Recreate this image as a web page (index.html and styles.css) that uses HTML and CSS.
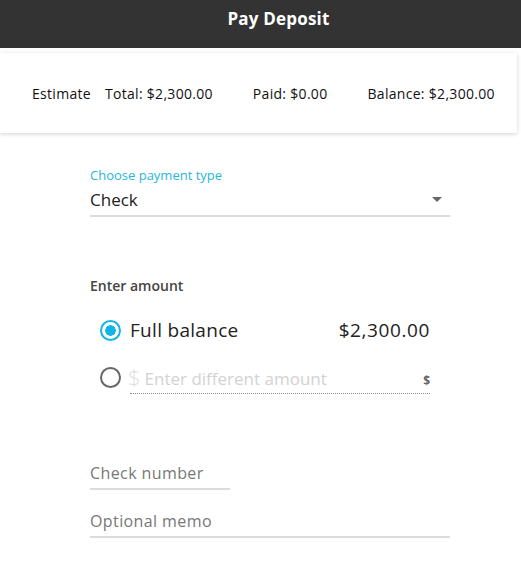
FILE: index.html
```html
<!DOCTYPE html>
<html lang="en">
<head>
  <meta charset="UTF-8" />
  <title>Pay Deposit</title>
  <meta name="viewport" content="width=device-width, initial-scale=1" />
  <link rel="stylesheet" href="styles.css">
</head>
<body>
  <header class="topbar">
    <h1>Pay Deposit</h1>
  </header>

  <section class="summary">
    <span class="summary-label">Estimate</span>
    <span class="summary-total">Total: $2,300.00</span>
    <span class="summary-paid">Paid: $0.00</span>
    <span class="summary-balance">Balance: $2,300.00</span>
  </section>

  <main class="form">
    <div class="field select-field">
      <label class="float-label">Choose payment type</label>
      <div class="select-value">
        <span>Check</span>
        <span class="caret"></span>
      </div>
    </div>

    <div class="amount">
      <div class="section-title">Enter amount</div>
      <div class="radio-row">
        <span class="radio checked"></span>
        <span class="radio-text">Full balance</span>
        <span class="radio-amount">$2,300.00</span>
      </div>
      <div class="radio-row">
        <span class="radio"></span>
        <div class="other-amount">
          <span class="dollar-big">$</span>
          <span class="placeholder">Enter different amount</span>
          <span class="dollar-small">$</span>
        </div>
      </div>
    </div>

    <div class="field text-field short">Check number</div>
    <div class="field text-field">Optional memo</div>
  </main>
</body>
</html>
```

FILE: styles.css
```css
body {
  margin: 0;
  font-family: 'Open Sans', sans-serif;
  background: #ffffff;
  color: #222;
}
.topbar {
  background: #333333;
  height: 48px;
  display: flex;
  align-items: center;
  justify-content: center;
}
.topbar h1 {
  margin: 0 0 12px 36px;
  color: #fff;
  font-size: 17px;
  letter-spacing: 0.2px;
  font-weight: 700;
}
.summary {
  margin: 5px 4px 0 0;
  height: 80px;
  background: #fff;
  box-shadow: 0 1px 4px rgba(0, 0, 0, 0.18);
  display: flex;
  align-items: center;
  padding-left: 32px;
  box-sizing: border-box;
  font-size: 14px;
  letter-spacing: 0.3px;
  color: #111;
}
.summary-total { margin-left: 14px; }
.summary-paid { margin-left: 40px; }
.summary-balance { margin-left: 40px; }

.form {
  width: 360px;
  margin: 33px 0 0 90px;
}
.float-label {
  display: block;
  color: #29b6d8;
  font-size: 13px;
}
.select-value {
  display: flex;
  justify-content: space-between;
  align-items: center;
  font-size: 17px;
  padding: 4px 0 4px;
  border-bottom: 2px solid #dcdcdc;
}
.caret {
  width: 0;
  height: 0;
  border-left: 5px solid transparent;
  border-right: 5px solid transparent;
  border-top: 5px solid #666;
  margin-right: 8px;
}
.amount {
  margin-top: 59px;
}
.section-title {
  font-size: 14px;
  font-weight: 600;
  color: #444;
}
.radio-row {
  display: flex;
  align-items: center;
  margin-top: 22px;
  padding-left: 10px;
  width: 330px;
}
.radio-row + .radio-row {
  margin-top: 18px;
}
.radio {
  box-sizing: border-box;
  width: 21px;
  height: 21px;
  border-radius: 50%;
  border: 2px solid #666;
  flex: none;
}
.radio.checked {
  border-color: #12b5e5;
  background: radial-gradient(circle, #12b5e5 0 5px, #fff 5.5px);
}
.radio-text {
  margin-left: 9px;
  font-size: 19px;
  letter-spacing: 0.3px;
  flex: 1;
}
.radio-amount {
  font-size: 19px;
  letter-spacing: 0.6px;
}
.other-amount {
  flex: 1;
  display: flex;
  align-items: baseline;
  margin-left: 9px;
  padding-bottom: 2px;
  border-bottom: 1px dotted #888;
}
.dollar-big {
  font-size: 22px;
  color: #ddd;
  font-weight: 300;
  margin-left: -2px;
}
.placeholder {
  flex: 1;
  margin-left: 4px;
  font-size: 17px;
  color: #d2d2d2;
}
.dollar-small {
  font-size: 12px;
  font-weight: 700;
  color: #666;
}
.text-field {
  margin-top: 20px;
  font-size: 16px;
  letter-spacing: 0.4px;
  color: #777;
  padding-bottom: 4px;
  border-bottom: 2px solid #dcdcdc;
}
.text-field.short {
  margin-top: 68px;
  width: 140px;
}
```
